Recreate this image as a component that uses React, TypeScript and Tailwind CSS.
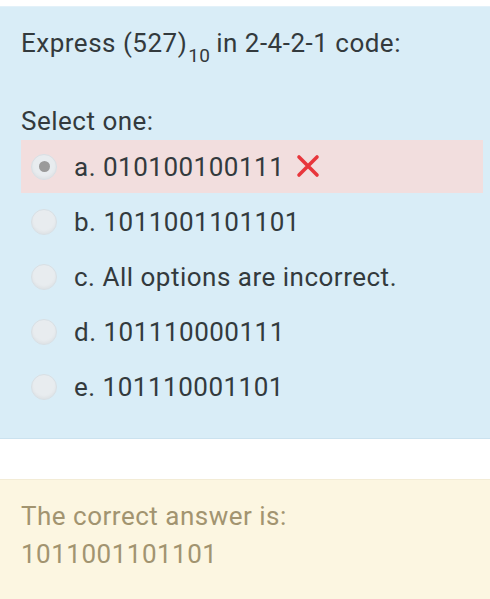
import React from "react";

const options = [
  { label: "a. 010100100111", selected: true, wrong: true },
  { label: "b. 1011001101101" },
  { label: "c. All options are incorrect." },
  { label: "d. 101110000111" },
  { label: "e. 101110001101" },
];

function Radio({ selected }: { selected?: boolean }) {
  return (
    <div className="w-[26px] h-[26px] rounded-full bg-[#e8ecef] border border-[#d8dfe4] shadow-[inset_0_-2px_3px_rgba(0,0,0,0.04)] flex items-center justify-center shrink-0">
      {selected && <div className="w-[11px] h-[11px] rounded-full bg-[#9a9a9a]" />}
    </div>
  );
}

function RedX() {
  return (
    <svg width="24" height="24" viewBox="0 0 24 24" className="ml-[12px] mt-[-2px]">
      <path d="M3 3 L21 21 M21 3 L3 21" stroke="#e8363c" strokeWidth="3.6" strokeLinecap="round" />
    </svg>
  );
}

export default function App() {
  return (
    <div
      className="w-full h-[599px] bg-white pt-[6px] overflow-hidden text-[#333a3d]"
      style={{ fontFamily: "Roboto, 'Liberation Sans', sans-serif" }}
    >
      <div className="bg-[#d9edf7] border-t border-[#e3f1f9] border-b border-b-[#cbe2ef] h-[433px] pl-[21px] pr-[7px] pt-[21px]">
        <div className="h-[30px] text-[26px] leading-[30px] tracking-[0.5px] whitespace-nowrap">
          Express (527)
          <span className="inline-block leading-none align-baseline text-[19px] relative top-[10px] ml-[1px] mr-[6px] tracking-[0.3px]">10</span>in 2-4-2-1 code:
        </div>
        <div className="text-[26px] leading-[30px] tracking-[0.5px] mt-[48px]">Select one:</div>
        <div className="mt-[4px] flex flex-col gap-[2px]">
          {options.map((o) => (
            <div
              key={o.label}
              className={
                "h-[53px] flex items-center pl-[10px] " + (o.wrong ? "bg-[#f2dede]" : "")
              }
            >
              <Radio selected={o.selected} />
              <span className="ml-[17px] text-[26px] leading-[30px] tracking-[0.5px]">{o.label}</span>
              {o.wrong && <RedX />}
            </div>
          ))}
        </div>
      </div>
      <div className="h-[40px]" />
      <div className="bg-[#fcf6e1] border-t border-[#f3ecd6] h-[130px] pl-[21px] pt-[17px] text-[#a29470] text-[26px] leading-[38px] tracking-[0.5px]">
        <div>The correct answer is:</div>
        <div>1011001101101</div>
      </div>
    </div>
  );
}
